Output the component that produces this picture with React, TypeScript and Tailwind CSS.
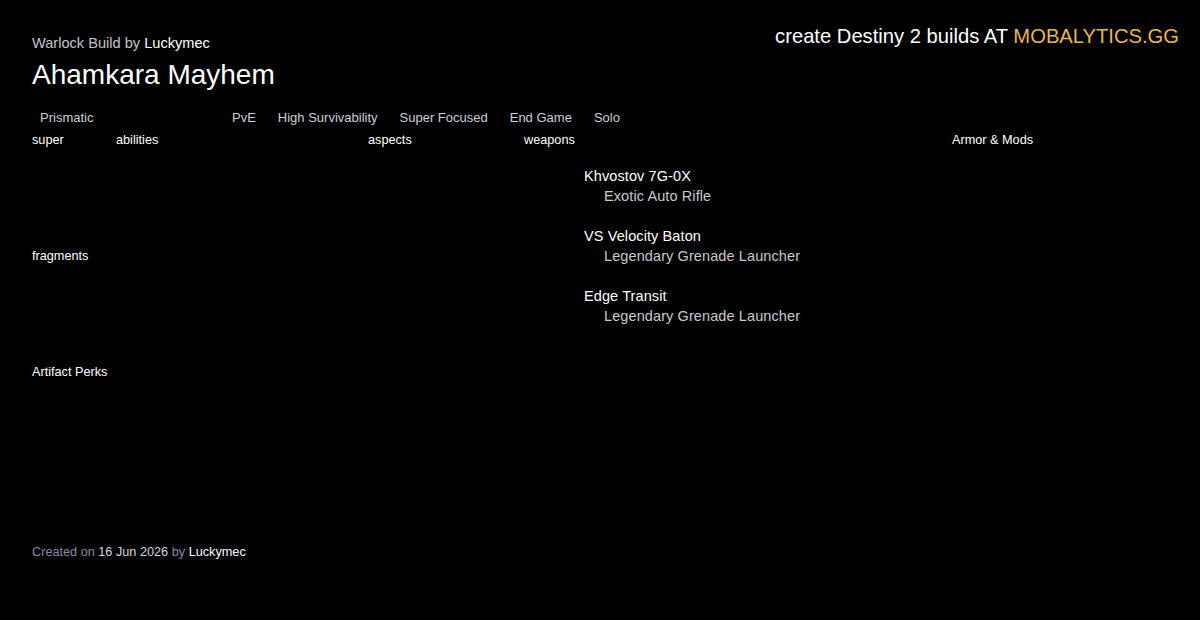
import React from "react";

const tags = ["PvE", "High Survivability", "Super Focused", "End Game", "Solo"];

const weapons = [
  { name: "Khvostov 7G-0X", type: "Exotic Auto Rifle" },
  { name: "VS Velocity Baton", type: "Legendary Grenade Launcher" },
  { name: "Edge Transit", type: "Legendary Grenade Launcher" },
];

function WeaponRow({ name, type }: { name: string; type: string }) {
  return (
    <div className="flex flex-col h-[60px] text-[14.5px] leading-5 tracking-[0.1px]">
      <p className="text-white">{name}</p>
      <p className="pl-5 text-[#c8c8cc]">{type}</p>
    </div>
  );
}

export default function App() {
  return (
    <div className="w-full h-[620px] bg-black flex flex-col font-['Liberation_Sans',Arial,sans-serif] overflow-hidden">
      <div className="flex justify-between pl-8 pr-[21px]">
        <div className="flex flex-col pt-[33px]">
          <p className="text-[14.6px] leading-5 text-[#c3c3cc]">
            Warlock Build by <span className="text-white">Luckymec</span>
          </p>
          <h1 className="mt-[5px] text-[28px] leading-[34px] text-white">Ahamkara Mayhem</h1>
        </div>
        <p className="pt-[22px] text-[20.2px] leading-7 text-white">
          create Destiny 2 builds AT <span className="text-[#e6b74f]">MOBALYTICS.GG</span>
        </p>
      </div>

      <div className="flex gap-[6px] mt-[18px] px-8 text-[13px] leading-4 text-[#cfcfd6]">
        <span className="w-[186px] px-2">Prismatic</span>
        {tags.map((t) => (
          <span key={t} className="px-2">
            {t}
          </span>
        ))}
      </div>

      <div className="flex flex-1 mt-[6px] px-8 text-[12.7px] leading-4 text-white">
        <div className="w-[492px] flex flex-col">
          <div className="flex">
            <span className="w-[84px]">super</span>
            <span className="w-[252px]">abilities</span>
            <span>aspects</span>
          </div>
          <p className="mt-[100px]">fragments</p>
          <p className="mt-[100px]">Artifact Perks</p>
        </div>
        <div className="w-[428px] flex flex-col">
          <span>weapons</span>
          <div className="flex flex-col mt-[18px] pl-[60px]">
            {weapons.map((w) => (
              <WeaponRow key={w.name} name={w.name} type={w.type} />
            ))}
          </div>
        </div>
        <div>
          <span>Armor &amp; Mods</span>
        </div>
      </div>

      <p className="px-8 pb-[60px] text-[12.7px] leading-4 text-[#8b89a3]">
        Created on <span className="text-[#d6d6de]">16 Jun 2026</span> by{" "}
        <span className="text-white">Luckymec</span>
      </p>
    </div>
  );
}
